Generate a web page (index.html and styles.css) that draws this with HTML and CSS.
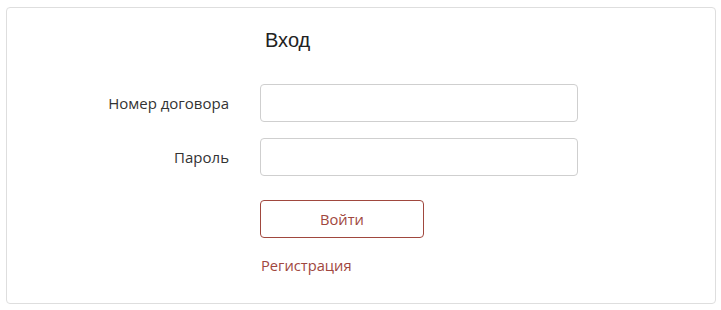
FILE: index.html
```html
<!DOCTYPE html>
<html lang="ru">
<head>
<meta charset="utf-8">
<title>Вход</title>
<link rel="stylesheet" href="styles.css">
</head>
<body>
<div class="card">
  <form class="form">
    <div class="spacer"></div>
    <h1 class="title">Вход</h1>
    <label class="label row-1" for="contract">Номер договора</label>
    <input class="input row-1" id="contract" type="text">
    <label class="label row-2" for="pass">Пароль</label>
    <input class="input row-2" id="pass" type="password">
    <div class="spacer"></div>
    <button class="btn" type="button">Войти</button>
    <div class="spacer"></div>
    <a class="link" href="#">Регистрация</a>
  </form>
</div>
</body>
</html>
```
FILE: styles.css
```css
html, body {
  margin: 0;
  padding: 0;
  background: #ffffff;
}
body {
  padding: 7px 6px 0 6px;
  font-family: "Open Sans", "Liberation Sans", sans-serif;
  color: #333333;
}
.card {
  box-sizing: border-box;
  width: 710px;
  height: 297px;
  border: 1px solid #dedede;
  border-radius: 4px;
  background: #fff;
  padding-top: 21px;
}
.form {
  display: grid;
  grid-template-columns: 223px 318px;
  column-gap: 30px;
  row-gap: 0;
  align-items: center;
}
.title {
  margin: 0 0 33px 0;
  padding-left: 5px;
  font-family: "Liberation Sans", Arial, sans-serif;
  font-weight: normal;
  font-size: 20px;
  line-height: 22px;
  color: #222;
}
.label {
  justify-self: end;
  padding-right: 1px;
  font-size: 15px;
  line-height: 20px;
  color: #333;
}
.input {
  box-sizing: border-box;
  height: 38px;
  width: 318px;
  margin: 0;
  border: 1px solid #cfcfcf;
  border-radius: 4px;
  background: #fff;
  font-family: inherit;
  font-size: 14px;
  padding: 0 10px;
}
.row-1 { margin-bottom: 16px; }
.row-2 { margin-bottom: 24px; }
.btn {
  box-sizing: border-box;
  width: 164px;
  height: 38px;
  border: 1px solid #a0473e;
  border-radius: 4px;
  background: #fff;
  color: #a0473e;
  font-family: "Open Sans", sans-serif;
  font-size: 14.7px;
  margin: 0 0 17px 0;
  padding: 0;
}
.link {
  padding-left: 1px;
  font-size: 14.7px;
  line-height: 20px;
  color: #a0473e;
  text-decoration: none;
}
```
